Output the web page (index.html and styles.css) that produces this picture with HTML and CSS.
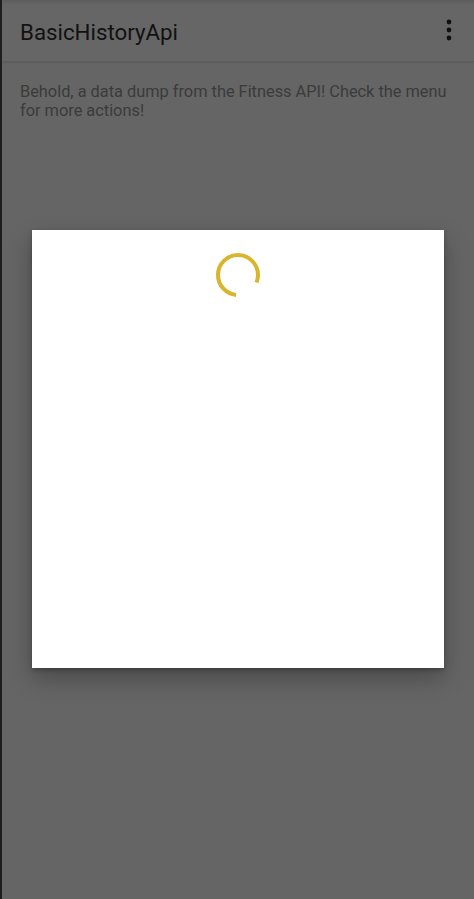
FILE: index.html
```html
<!DOCTYPE html>
<html>
<head>
<meta charset="utf-8">
<link rel="stylesheet" href="styles.css">
</head>
<body>
<div class="screen">
  <header class="toolbar">
    <span class="title">BasicHistoryApi</span>
    <svg class="menu" width="8" height="22" viewBox="0 0 8 22"><circle cx="4" cy="3" r="2.4"/><circle cx="4" cy="11" r="2.4"/><circle cx="4" cy="19" r="2.4"/></svg>
  </header>
  <p class="intro">Behold, a data dump from the Fitness API! Check the menu for more actions!</p>
  <div class="dialog">
    <svg class="spinner" width="48" height="48" viewBox="0 0 48 48">
      <circle cx="24" cy="24" r="20" fill="none" stroke="#d8b52c" stroke-width="4" stroke-dasharray="100.2 25.5" stroke-dashoffset="-33.2" stroke-linecap="butt"/>
    </svg>
  </div>
</div>
</body>
</html>
```

FILE: styles.css
```css
html, body {
  margin: 0;
  padding: 0;
  background: #646464;
}
.screen {
  width: 474px;
  height: 899px;
  box-sizing: border-box;
  border-left: 2px solid #1e1e1e;
  background: #656565;
  font-family: Roboto, "Noto Sans", sans-serif;
  overflow: hidden;
  display: flex;
  flex-direction: column;
}
.toolbar {
  height: 62px;
  flex: none;
  box-sizing: border-box;
  display: flex;
  align-items: center;
  justify-content: space-between;
  padding: 2px 21px 0 18px;
  background: linear-gradient(#5d5d5d 0, #666 5px, #666 100%);
  border-bottom: 1px solid #5c5c5c;
  box-shadow: 0 1px 2px rgba(0,0,0,0.08);
}
.title {
  font-size: 22.3px;
  color: #121212;
}
.menu {
  margin-top: -4px;
}
.menu circle { fill: #111; }
.intro {
  margin: 21px 12px 0 18px;
  font-size: 16.35px;
  line-height: 18.5px;
  color: #3b3b3b;
}
.dialog {
  margin: 110px 0 0 30px;
  width: 412px;
  height: 438px;
  background: #fff;
  box-shadow: 0 10px 22px rgba(0,0,0,0.28), 0 2px 4px rgba(0,0,0,0.25);
  display: flex;
  justify-content: center;
  align-items: flex-start;
}
.spinner {
  margin-top: 21px;
}
```
